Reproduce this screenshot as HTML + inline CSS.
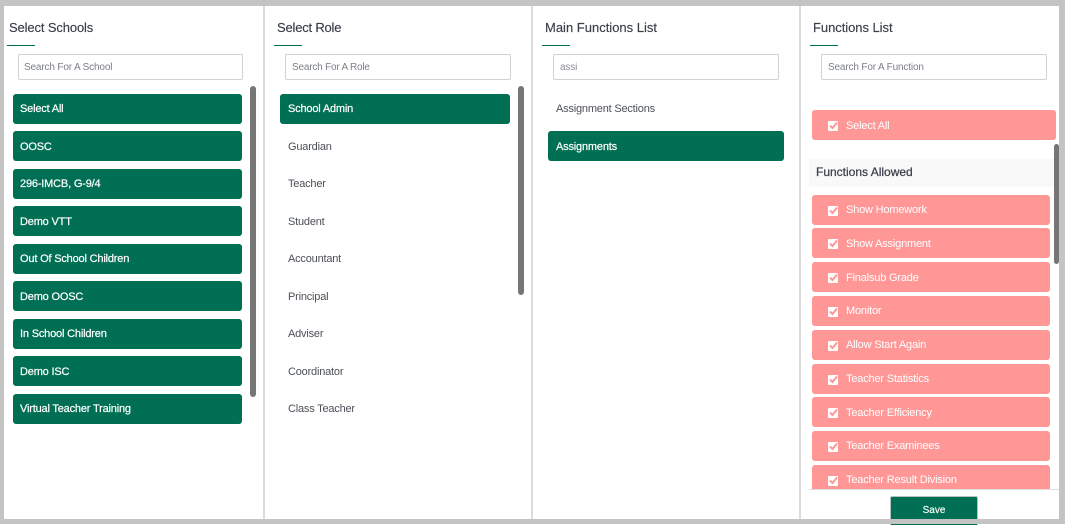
<!DOCTYPE html>
<html><head><meta charset="utf-8"><style>
html,body{margin:0;padding:0;width:1065px;height:526px;overflow:hidden;background:#fff;font-family:"Liberation Sans",sans-serif}
.a{position:absolute;box-sizing:border-box}
.h{font-size:13px;color:#3a3f4a;top:20px;line-height:16px;white-space:nowrap;-webkit-text-stroke:.15px #3a3f4a}
.u{height:1px;background:#006f53;top:45px;width:28px}
.s{top:54px;height:26px;width:226px;border:1px solid #d2d2d2;border-radius:2px;background:#fff;font-size:10px;line-height:26px;padding-left:6px;color:#7b7f88;letter-spacing:-.15px}
.g{background:#006f53;color:#fff;border-radius:3px;height:30px;font-size:11px;line-height:30px;padding-left:7px;white-space:nowrap;letter-spacing:-.18px;-webkit-text-stroke:.2px #fff}
.t{color:#4c5058;font-size:11px;line-height:18px;white-space:nowrap;letter-spacing:-.2px}
.p{background:#ff9797;color:#fff;border-radius:3px;height:30px;font-size:11px;line-height:30px;padding-left:34px;white-space:nowrap;letter-spacing:-.18px}
.p svg{position:absolute;left:16px;top:10px}
.q{line-height:32px}
.b{background:#767676;border-radius:3px;width:6px}
</style></head><body>
<div class="a" style="left:0;top:0;width:1065px;height:6px;background:#c4c4c4"></div>
<div class="a" style="left:0;top:0;width:4px;height:524px;background:#c4c4c4"></div>
<div class="a" style="left:1059px;top:0;width:6px;height:524px;background:#c4c4c4"></div>
<div class="a" style="left:263px;top:6px;width:2px;height:513px;background:#dcdcdc"></div>
<div class="a" style="left:531px;top:6px;width:2px;height:513px;background:#dcdcdc"></div>
<div class="a" style="left:799px;top:6px;width:2px;height:513px;background:#dcdcdc"></div>

<div class="a h" style="left:9px;letter-spacing:-.13px">Select Schools</div><div class="a u" style="left:7px"></div>
<div class="a s" style="left:18px;width:225px;padding-left:5px">Search For A School</div>
<div class="a g" style="left:13px;top:94px;width:229px">Select All</div>
<div class="a g q" style="left:13px;top:131px;width:229px">OOSC</div>
<div class="a g" style="left:13px;top:169px;width:229px">296-IMCB, G-9/4</div>
<div class="a g q" style="left:13px;top:206px;width:229px">Demo VTT</div>
<div class="a g" style="left:13px;top:244px;width:229px">Out Of School Children</div>
<div class="a g q" style="left:13px;top:281px;width:229px">Demo OOSC</div>
<div class="a g" style="left:13px;top:319px;width:229px">In School Children</div>
<div class="a g q" style="left:13px;top:356px;width:229px">Demo ISC</div>
<div class="a g" style="left:13px;top:394px;width:229px">Virtual Teacher Training</div>
<div class="a b" style="left:250px;top:86px;height:311px"></div>

<div class="a h" style="left:277px;letter-spacing:-.2px">Select Role</div><div class="a u" style="left:274px"></div>
<div class="a s" style="left:285px;letter-spacing:-.2px">Search For A Role</div>
<div class="a g" style="left:280px;top:94px;width:230px;padding-left:8px">School Admin</div>
<div class="a t" style="left:288px;top:138px">Guardian</div>
<div class="a t" style="left:288px;top:175px">Teacher</div>
<div class="a t" style="left:288px;top:213px">Student</div>
<div class="a t" style="left:288px;top:250px">Accountant</div>
<div class="a t" style="left:288px;top:288px">Principal</div>
<div class="a t" style="left:288px;top:325px">Adviser</div>
<div class="a t" style="left:288px;top:363px">Coordinator</div>
<div class="a t" style="left:288px;top:400px">Class Teacher</div>
<div class="a b" style="left:518px;top:86px;height:209px"></div>

<div class="a h" style="left:545px">Main Functions List</div><div class="a u" style="left:542px"></div>
<div class="a s" style="left:553px;color:#8a8d94">assi</div>
<div class="a t" style="left:556px;top:100px">Assignment Sections</div>
<div class="a g q" style="left:548px;top:131px;width:236px;padding-left:8px">Assignments</div>

<div class="a h" style="left:813px;letter-spacing:-.05px">Functions List</div><div class="a u" style="left:810px"></div>
<div class="a s" style="left:821px">Search For A Function</div>
<div class="a p q" style="left:812px;top:110px;width:244px"><svg width="11" height="11" viewBox="0 0 11 11" style="top:10px"><rect y="1" width="10" height="10" rx="1" fill="#fff"/><path d="M2 5.5l2.5 2.5L9 2.5" stroke="#ff9797" stroke-width="2" fill="none"/></svg>Select All</div>
<div class="a" style="left:809px;top:159px;width:245px;height:28px;background:#f9f9f9;font-size:12px;color:#3a3f4a;line-height:26px;padding-left:7px;-webkit-text-stroke:.25px #3a3f4a">Functions Allowed</div>

<div class="a" style="left:801px;top:190px;width:258px;height:299px;overflow:hidden">
<div class="a p" style="left:11px;top:5px;width:238px"><svg width="11" height="11" viewBox="0 0 11 11"><rect y="1" width="10" height="10" rx="1" fill="#fff"/><path d="M2 5.5l2.5 2.5L9 2.5" stroke="#ff9797" stroke-width="2" fill="none"/></svg>Show Homework</div>
<div class="a p q" style="left:11px;top:38px;width:238px"><svg width="11" height="11" viewBox="0 0 11 11"><rect y="1" width="10" height="10" rx="1" fill="#fff"/><path d="M2 5.5l2.5 2.5L9 2.5" stroke="#ff9797" stroke-width="2" fill="none"/></svg>Show Assignment</div>
<div class="a p q" style="left:11px;top:72px;width:238px"><svg width="11" height="11" viewBox="0 0 11 11"><rect y="1" width="10" height="10" rx="1" fill="#fff"/><path d="M2 5.5l2.5 2.5L9 2.5" stroke="#ff9797" stroke-width="2" fill="none"/></svg>Finalsub Grade</div>
<div class="a p" style="left:11px;top:106px;width:238px"><svg width="11" height="11" viewBox="0 0 11 11"><rect y="1" width="10" height="10" rx="1" fill="#fff"/><path d="M2 5.5l2.5 2.5L9 2.5" stroke="#ff9797" stroke-width="2" fill="none"/></svg>Monitor</div>
<div class="a p" style="left:11px;top:140px;width:238px"><svg width="11" height="11" viewBox="0 0 11 11"><rect y="1" width="10" height="10" rx="1" fill="#fff"/><path d="M2 5.5l2.5 2.5L9 2.5" stroke="#ff9797" stroke-width="2" fill="none"/></svg>Allow Start Again</div>
<div class="a p" style="left:11px;top:174px;width:238px"><svg width="11" height="11" viewBox="0 0 11 11"><rect y="1" width="10" height="10" rx="1" fill="#fff"/><path d="M2 5.5l2.5 2.5L9 2.5" stroke="#ff9797" stroke-width="2" fill="none"/></svg>Teacher Statistics</div>
<div class="a p q" style="left:11px;top:207px;width:238px"><svg width="11" height="11" viewBox="0 0 11 11"><rect y="1" width="10" height="10" rx="1" fill="#fff"/><path d="M2 5.5l2.5 2.5L9 2.5" stroke="#ff9797" stroke-width="2" fill="none"/></svg>Teacher Efficiency</div>
<div class="a p" style="left:11px;top:241px;width:238px"><svg width="11" height="11" viewBox="0 0 11 11"><rect y="1" width="10" height="10" rx="1" fill="#fff"/><path d="M2 5.5l2.5 2.5L9 2.5" stroke="#ff9797" stroke-width="2" fill="none"/></svg>Teacher Examinees</div>
<div class="a p" style="left:11px;top:275px;width:238px"><svg width="11" height="11" viewBox="0 0 11 11"><rect y="1" width="10" height="10" rx="1" fill="#fff"/><path d="M2 5.5l2.5 2.5L9 2.5" stroke="#ff9797" stroke-width="2" fill="none"/></svg>Teacher Result Division</div>
</div>
<div class="a b" style="left:1054px;top:144px;height:120px;width:5px"></div>
<div class="a" style="left:809px;top:489px;width:250px;height:1px;background:#ddd"></div>
<div class="a" style="left:890px;top:496px;width:88px;height:29px;background:#006f53;border:1px solid #b5c4bf;border-bottom:0;border-radius:2px 2px 0 0;color:#fff;font-size:10px;text-align:center;line-height:27px;-webkit-text-stroke:.15px #fff">Save</div>
<div class="a" style="left:0;top:519px;width:1065px;height:5px;background:#c4c4c4"></div>
</body></html>
